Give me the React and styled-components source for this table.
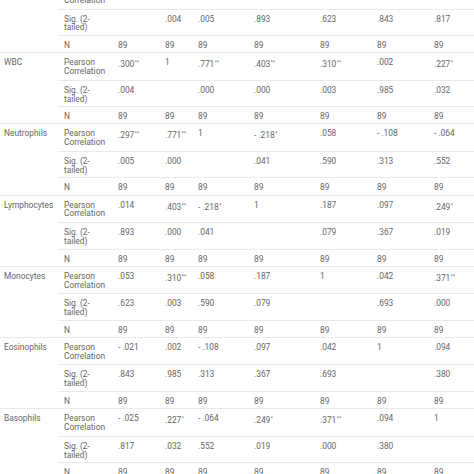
import React from "react";
import styled, { createGlobalStyle } from "styled-components";

const Global = createGlobalStyle`
  html, body {
    margin: 0;
    padding: 0;
    background: #ffffff;
  }
  body {
    font-family: Roboto, "Liberation Sans", sans-serif;
  }
`;

const names = ["Density", "WBC", "Neutrophils", "Lymphocytes", "Monocytes", "Eosinophils", "Basophils"];

const r = [
  ["1", ".300**", ".297**", ".014", ".053", "- .021", "- .025"],
  [".300**", "1", ".771**", ".403**", ".310**", ".002", ".227*"],
  [".297**", ".771**", "1", "- .218*", ".058", "- .108", "- .064"],
  [".014", ".403**", "- .218*", "1", ".187", ".097", ".249*"],
  [".053", ".310**", ".058", ".187", "1", ".042", ".371**"],
  ["- .021", ".002", "- .108", ".097", ".042", "1", ".094"],
  ["- .025", ".227*", "- .064", ".249*", ".371**", ".094", "1"],
];

const sig = [
  ["", ".004", ".005", ".893", ".623", ".843", ".817"],
  [".004", "", ".000", ".000", ".003", ".985", ".032"],
  [".005", ".000", "", ".041", ".590", ".313", ".552"],
  [".893", ".000", ".041", "", ".079", ".367", ".019"],
  [".623", ".003", ".590", ".079", "", ".693", ".000"],
  [".843", ".985", ".313", ".367", ".693", "", ".380"],
  [".817", ".032", ".552", ".019", ".000", ".380", ""],
];

const Page = styled.div`
  width: 474px;
  height: 474px;
  overflow: hidden;
`;

const Table = styled.div`
  margin-top: -19px;
  color: #666666;
  font-size: 8.4px;
  line-height: 8.9px;
`;

const Group = styled.div`
  display: grid;
  grid-template-columns: 58px 1fr;
  border-top: 1.5px solid #e9e9e9;
`;

const Label = styled.div`
  padding: 5px 0 0 4px;
  line-height: 9px;
  white-space: nowrap;
`;

const Rows = styled.div`
  display: flex;
  flex-direction: column;
`;

const Row = styled.div`
  display: grid;
  grid-template-columns: 55px 47px 33px 56px 66px 57px 57px 45px;
  box-sizing: border-box;
  height: ${(p) => p.$h}px;
  border-top: ${(p) => (p.$first ? "none" : "1.5px solid #e9e9e9")};
`;

const Kind = styled.div`
  padding: 5px 0 0 6px;
`;

const Cell = styled.div`
  padding: 5px 0 0 5px;
  white-space: nowrap;
`;

const Star = styled.sup`
  font-size: 5px;
  vertical-align: 3px;
  margin-left: 0.5px;
`;

const Value = ({ v }) => {
  const m = v.match(/^([^*]*)(\**)$/);
  return (
    <Cell>
      {m[1]}
      {m[2] && <Star>{m[2]}</Star>}
    </Cell>
  );
};

const App = () => (
  <Page>
    <Global />
    <Table>
      {names.map((name, i) => (
        <Group key={name}>
          <Label>{name}</Label>
          <Rows>
            <Row $h={26.5} $first>
              <Kind>
                Pearson
                <br />
                Correlation
              </Kind>
              {r[i].map((v, j) => (
                <Value key={j} v={v} />
              ))}
            </Row>
            <Row $h={26.5}>
              <Kind>
                Sig. (2-
                <br />
                tailed)
              </Kind>
              {sig[i].map((v, j) => (
                <Value key={j} v={v} />
              ))}
            </Row>
            <Row $h={17.2}>
              <Kind>N</Kind>
              {r[i].map((_, j) => (
                <Value key={j} v="89" />
              ))}
            </Row>
          </Rows>
        </Group>
      ))}
    </Table>
  </Page>
);

export default App;
